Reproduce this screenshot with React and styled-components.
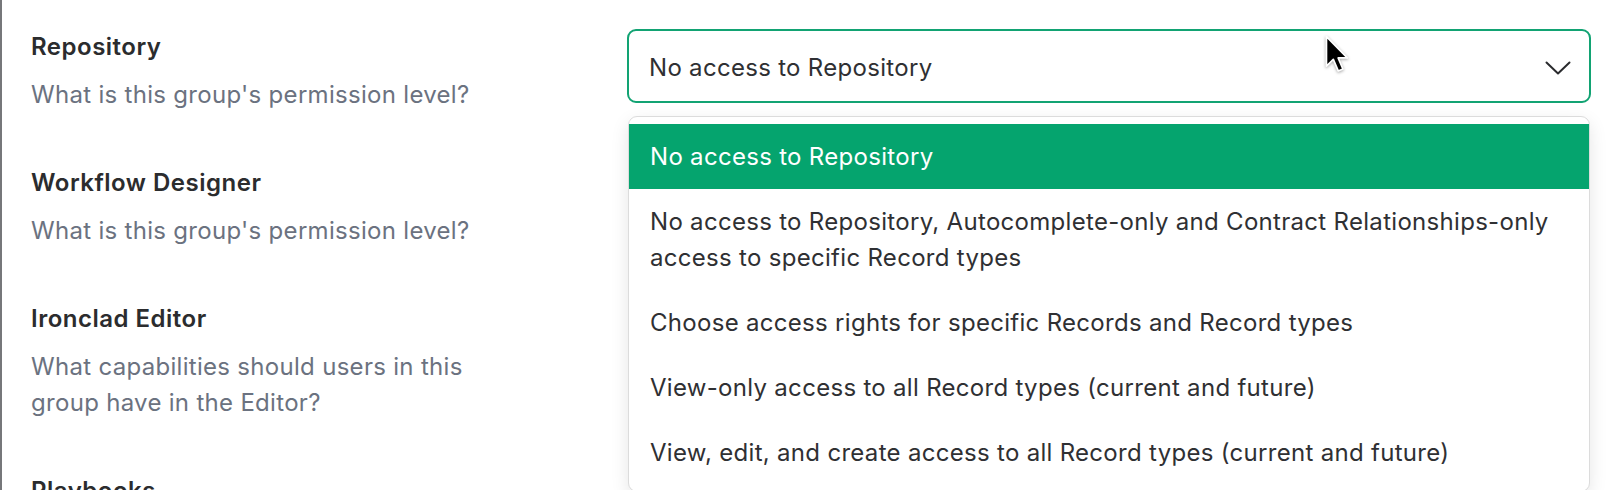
import React from "react";
import styled, { createGlobalStyle } from "styled-components";

const Global = createGlobalStyle`
  html, body { margin: 0; padding: 0; background: #ffffff; }
  body {
    font-family: Inter, "Noto Sans", "Liberation Sans", sans-serif;
    -webkit-font-smoothing: antialiased;
  }
  #root { height: 490px; overflow: hidden; }
`;

const Page = styled.div`
  height: 490px;
  box-sizing: border-box;
  border-left: 2px solid #76777a;
  padding: 29px 23px 0 29px;
  display: flex;
  flex-direction: column;
  gap: 52px;
  position: relative;
  overflow: hidden;
`;

const Row = styled.div`
  display: grid;
  grid-template-columns: 596px 964px;
  align-items: start;
`;

const Info = styled.div`
  display: flex;
  flex-direction: column;
  gap: 12px;
  max-width: 470px;
`;

const Label = styled.div`
  font-size: 24px;
  line-height: 36px;
  font-weight: 600;
  letter-spacing: 0.5px;
  color: #2b2c2e;
`;

const Hint = styled.div`
  font-size: 24px;
  line-height: 36px;
  font-weight: 400;
  letter-spacing: 0.3px;
  color: #6b7280;
`;

const SelectWrap = styled.div`
  position: relative;
`;

const Trigger = styled.div`
  box-sizing: border-box;
  height: 74px;
  border: 2px solid #12a373;
  border-radius: 9px;
  display: flex;
  align-items: center;
  justify-content: space-between;
  padding: 3px 18px 0 20px;
  font-size: 24px;
  letter-spacing: 0.3px;
  color: #2f3033;
  background: #fff;
`;

const Menu = styled.ul`
  position: absolute;
  top: 87px;
  left: 1px;
  right: 1px;
  margin: 0;
  padding: 7px 0 6px;
  list-style: none;
  background: #fff;
  border: 1px solid #dcdcdc;
  border-radius: 9px;
  box-shadow: 0 6px 18px rgba(0, 0, 0, 0.1);
  z-index: 2;
`;

const Option = styled.li`
  padding: 14.5px 22px 14.5px 21px;
  font-size: 24px;
  line-height: 36px;
  letter-spacing: 0.3px;
  color: ${(p) => (p.$active ? "#ffffff" : "#2f3033")};
  background: ${(p) => (p.$active ? "#05a46e" : "transparent")};
`;

const Cursor = styled.svg`
  position: absolute;
  left: 1322px;
  top: 34px;
  z-index: 5;
  filter: drop-shadow(0 1px 1.5px rgba(0, 0, 0, 0.35));
`;

const Chevron = () => (
  <svg width="26" height="14" viewBox="0 0 26 14" fill="none">
    <path d="M1.5 1.5 L13 12.5 L24.5 1.5" stroke="#2a2b2e" strokeWidth="2" strokeLinecap="round" strokeLinejoin="round" />
  </svg>
);

const sections = [
  { label: "Repository", hint: "What is this group's permission level?" },
  { label: "Workflow Designer", hint: "What is this group's permission level?" },
  { label: "Ironclad Editor", hint: "What capabilities should users in this group have in the Editor?" },
  { label: "Playbooks", hint: "What is this group's permission level?" },
];

const options = [
  "No access to Repository",
  "No access to Repository, Autocomplete-only and Contract Relationships-only access to specific Record types",
  "Choose access rights for specific Records and Record types",
  "View-only access to all Record types (current and future)",
  "View, edit, and create access to all Record types (current and future)",
];

export default function App() {
  return (
    <>
      <Global />
      <Page>
        {sections.map((s, i) => (
          <Row key={s.label}>
            <Info>
              <Label>{s.label}</Label>
              <Hint>{s.hint}</Hint>
            </Info>
            {i === 0 && (
              <SelectWrap>
                <Trigger>
                  <span>No access to Repository</span>
                  <Chevron />
                </Trigger>
                <Menu>
                  {options.map((o, j) => (
                    <Option key={o} $active={j === 0}>{o}</Option>
                  ))}
                </Menu>
              </SelectWrap>
            )}
          </Row>
        ))}
        <Cursor width="27" height="42" viewBox="0 0 22 34">
          <path d="M2 2 L2 26 L7.6 20.6 L11.6 30 L15.4 28.4 L11.5 19.4 L19 19.4 Z" fill="#000" stroke="#fff" strokeWidth="1.4" strokeLinejoin="round" />
        </Cursor>
      </Page>
    </>
  );
}
